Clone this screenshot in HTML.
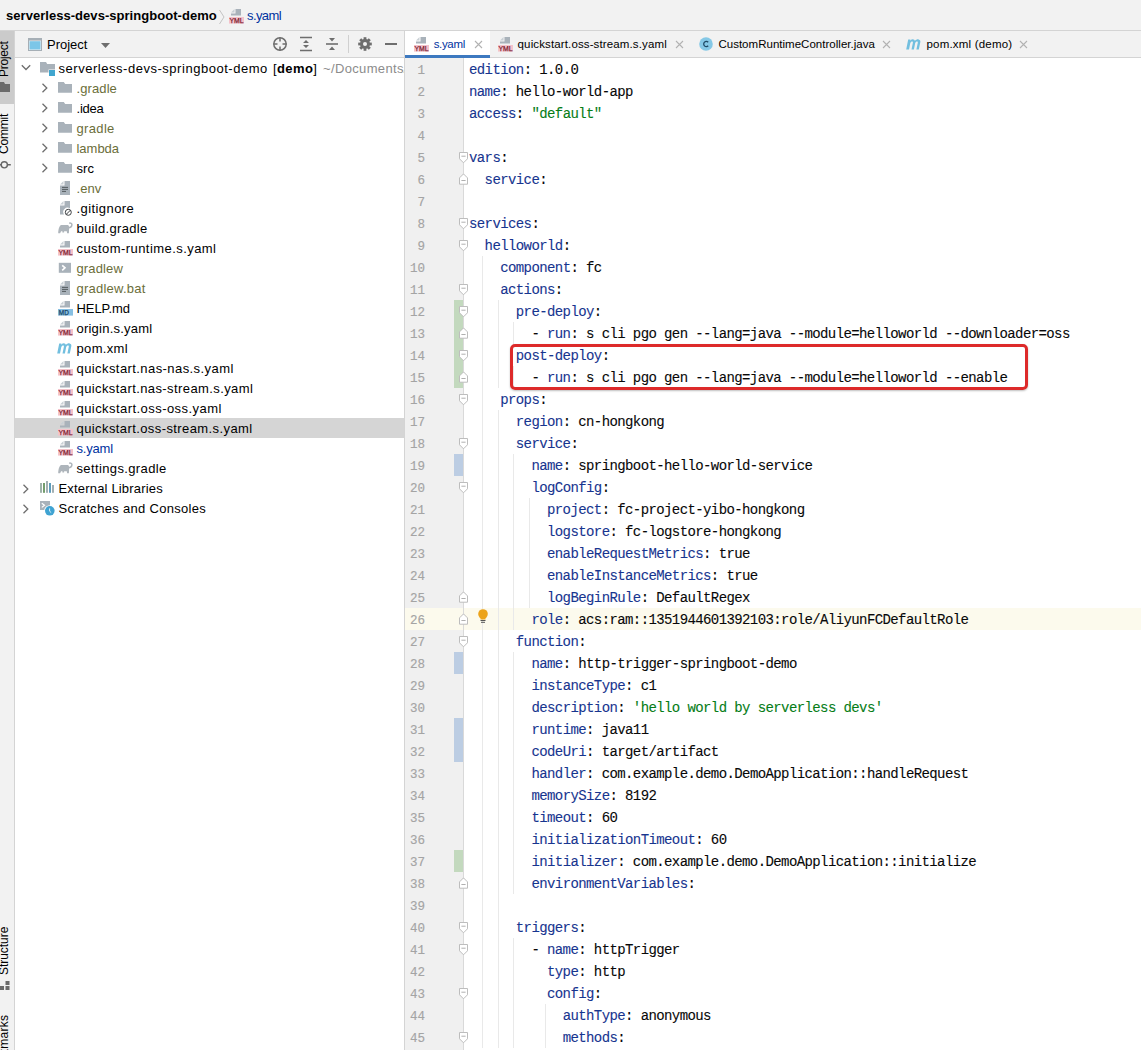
<!DOCTYPE html><html><head><meta charset="utf-8"><style>
html,body{margin:0;padding:0}
body{width:1141px;height:1050px;position:relative;overflow:hidden;background:#f2f2f2;font-family:"Liberation Sans",sans-serif}
.a{position:absolute}
.t{position:absolute;white-space:pre;font-family:"Liberation Sans",sans-serif}
.c{position:absolute;left:469px;white-space:pre;font-family:"Liberation Mono",monospace;font-size:14px;letter-spacing:-0.6px;line-height:22px;color:#080808;-webkit-text-stroke:0.1px currentColor}
.k{color:#17358f}
.s{color:#067d17}
.ln{position:absolute;left:405px;width:20px;text-align:right;white-space:pre;font-family:"Liberation Mono",monospace;font-size:12.5px;line-height:22px;color:#a4a4a4;-webkit-text-stroke:0.15px currentColor}
</style></head><body>
<div class="a" style="left:0;top:0;width:1141px;height:30px;background:#f2f2f2"></div>
<div class="a" style="left:0;top:30px;width:1141px;height:1px;background:#d4d4d4"></div>
<div class="t" style="left:6px;top:6px;font-size:13px;line-height:20px;color:#000;letter-spacing:0.04px;font-weight:bold;">serverless-devs-springboot-demo</div>
<svg class="a" style="left:218px;top:9px" width="8" height="16" viewBox="0 0 8 16"><path d="M1.5 1L6 8L1.5 15" fill="none" stroke="#c4c4c4" stroke-width="1"/></svg>
<svg style="position:absolute;left:229px;top:8px" width="16" height="16" viewBox="0 0 16 16"><g transform="translate(0,1)"><path d="M6.5 0H12V6.5H2V4.5H6.5Z" fill="#a9b2ba"/><path d="M5.5 0V3.5H2Z" fill="#c9d0d5"/></g><rect x="0" y="9" width="15" height="6.6" fill="#f4c2ca"/><text x="7.5" y="14.6" font-family="Liberation Sans" font-size="7.4" fill="#7a1c30" stroke="#7a1c30" stroke-width="0.25" text-anchor="middle" textLength="14" lengthAdjust="spacingAndGlyphs">YML</text></svg>
<div class="t" style="left:247px;top:6px;font-size:13px;line-height:20px;color:#0032a0;letter-spacing:-0.6px;">s.yaml</div>
<div class="a" style="left:0;top:31px;width:14px;height:1019px;background:#f2f2f2"></div>
<div class="a" style="left:14px;top:31px;width:1px;height:1019px;background:#d4d4d4"></div>
<div class="a" style="left:0;top:31px;width:14px;height:73px;background:#cbcbcb"></div>
<div class="t" style="left:0;top:76.5px;width:0;height:0;"><div style="position:absolute;left:-3px;top:0;transform-origin:0 0;transform:rotate(-90deg);font-size:12px;line-height:14px;letter-spacing:-0.25px;color:#000;white-space:pre">Project</div></div>
<svg class="a" style="left:0;top:82px" width="11" height="11" viewBox="0 0 11 11"><path d="M0 0H4L5 2H10V10H0Z" fill="#6b6b6b"/></svg>
<div class="t" style="left:0;top:154px;width:0;height:0;"><div style="position:absolute;left:-3px;top:0;transform-origin:0 0;transform:rotate(-90deg);font-size:12px;line-height:14px;letter-spacing:-0.2px;color:#000;white-space:pre">Commit</div></div>
<svg class="a" style="left:0;top:158px" width="12" height="14" viewBox="0 0 12 14"><circle cx="4.3" cy="6.8" r="3.1" fill="none" stroke="#666" stroke-width="1.4"/><path d="M0 6.8H1.2M7.4 6.8H10.8" stroke="#666" stroke-width="1.4"/></svg>
<div class="t" style="left:0;top:974.5px;width:0;height:0;"><div style="position:absolute;left:-3px;top:0;transform-origin:0 0;transform:rotate(-90deg);font-size:12px;line-height:14px;letter-spacing:-0.037px;color:#000;white-space:pre">Structure</div></div>
<svg class="a" style="left:0;top:981px" width="11" height="10" viewBox="0 0 11 10"><rect x="0" y="5" width="4" height="4" fill="#6b6b6b"/><rect x="5.5" y="5" width="4" height="4" fill="#6b6b6b"/><rect x="5.5" y="0" width="4" height="4" fill="#6b6b6b"/></svg>
<div class="t" style="left:0;top:1077px;width:0;height:0;"><div style="position:absolute;left:-3px;top:0;transform-origin:0 0;transform:rotate(-90deg);font-size:12px;line-height:14px;letter-spacing:0.25px;color:#000;white-space:pre">Bookmarks</div></div>
<div class="a" style="left:15px;top:31px;width:389px;height:26px;background:#f2f2f2"></div>
<div class="a" style="left:15px;top:57px;width:389px;height:1px;background:#d4d4d4"></div>
<svg class="a" style="left:28px;top:38px" width="14" height="13" viewBox="0 0 14 13"><rect x="0.5" y="0.5" width="13" height="12" fill="none" stroke="#a6afb6" stroke-width="1"/><rect x="0" y="0" width="14" height="2.6" fill="#a6afb6"/><rect x="1.5" y="3.2" width="11" height="8.3" fill="#7cc6e8"/></svg>
<div class="t" style="left:47px;top:35px;font-size:13px;line-height:20px;color:#000;letter-spacing:0.0px;">Project</div>
<svg class="a" style="left:100.5px;top:42.8px" width="9" height="5" viewBox="0 0 9 5"><path d="M0 0H9L4.5 5Z" fill="#6e6e6e"/></svg>
<svg class="a" style="left:272px;top:36px" width="16" height="16" viewBox="0 0 16 16"><circle cx="8" cy="8" r="6.2" fill="none" stroke="#6e6e6e" stroke-width="1.5"/><path d="M8 1.5V5.5M8 10.5V14.5M1.5 8H5.5M10.5 8H14.5" stroke="#6e6e6e" stroke-width="1.5"/></svg>
<svg class="a" style="left:299px;top:36px" width="14" height="16" viewBox="0 0 14 16"><path d="M1 1.5H13M1 14.5H13" stroke="#6e6e6e" stroke-width="1.6"/><path d="M7 4L10 7H4Z M7 12L4 9H10Z" fill="#6e6e6e"/></svg>
<svg class="a" style="left:325px;top:36px" width="14" height="16" viewBox="0 0 14 16"><path d="M1 8H13" stroke="#6e6e6e" stroke-width="1.6"/><path d="M4 2H10L7 5.5Z M4 14H10L7 10.5Z" fill="#6e6e6e"/></svg>
<div class="a" style="left:348px;top:35px;width:1px;height:18px;background:#d0d0d0"></div>
<svg class="a" style="left:357px;top:36px" width="16" height="16" viewBox="0 0 16 16"><g fill="#6e6e6e"><circle cx="8" cy="8" r="5"/><rect x="6.6" y="1.2" width="2.8" height="3" transform="rotate(0 8 8)"/><rect x="6.6" y="1.2" width="2.8" height="3" transform="rotate(45 8 8)"/><rect x="6.6" y="1.2" width="2.8" height="3" transform="rotate(90 8 8)"/><rect x="6.6" y="1.2" width="2.8" height="3" transform="rotate(135 8 8)"/><rect x="6.6" y="1.2" width="2.8" height="3" transform="rotate(180 8 8)"/><rect x="6.6" y="1.2" width="2.8" height="3" transform="rotate(225 8 8)"/><rect x="6.6" y="1.2" width="2.8" height="3" transform="rotate(270 8 8)"/><rect x="6.6" y="1.2" width="2.8" height="3" transform="rotate(315 8 8)"/></g><circle cx="8" cy="8" r="2" fill="#f2f2f2"/></svg>
<div class="a" style="left:385px;top:43px;width:12px;height:2px;background:#6e6e6e"></div>
<div class="a" style="left:15px;top:58px;width:389px;height:992px;background:#fff"></div>
<div class="a" style="left:404px;top:31px;width:1px;height:1019px;background:#d4d4d4"></div>
<div class="a" style="left:15px;top:418px;width:389px;height:20px;background:#d5d5d5"></div>
<svg style="position:absolute;left:21px;top:63.6px" width="10" height="7" viewBox="0 0 10 7"><path d="M0.8 1.2L5 5.5L9.2 1.2" fill="none" stroke="#6e6e6e" stroke-width="1.3"/></svg>
<svg style="position:absolute;left:40px;top:62px" width="16" height="15" viewBox="0 0 16 15"><path d="M0 0H6L7.2 2H15V7.5H8.5V10.5H0Z" fill="#a9b2ba"/><rect x="9" y="8" width="6" height="6" fill="#41a6cf"/></svg>
<div class="t" style="left:58.5px;top:59px;font-size:13px;line-height:20px;color:#000;letter-spacing:0.53px;">serverless-devs-springboot-demo</div>
<svg style="position:absolute;left:40.5px;top:82.5px" width="8" height="10" viewBox="0 0 8 10"><path d="M1.5 0.8L5.8 5L1.5 9.2" fill="none" stroke="#6e6e6e" stroke-width="1.3"/></svg>
<svg style="position:absolute;left:58px;top:82px" width="15" height="12" viewBox="0 0 15 12"><path d="M0 0H5.8L7.2 2H14V10.8H0Z" fill="#a9b2ba"/></svg>
<div class="t" style="left:76.5px;top:79px;font-size:13px;line-height:20px;color:#6b6e3a;letter-spacing:0.1px;">.gradle</div>
<svg style="position:absolute;left:40.5px;top:102.5px" width="8" height="10" viewBox="0 0 8 10"><path d="M1.5 0.8L5.8 5L1.5 9.2" fill="none" stroke="#6e6e6e" stroke-width="1.3"/></svg>
<svg style="position:absolute;left:58px;top:102px" width="15" height="12" viewBox="0 0 15 12"><path d="M0 0H5.8L7.2 2H14V10.8H0Z" fill="#a9b2ba"/></svg>
<div class="t" style="left:76.5px;top:99px;font-size:13px;line-height:20px;color:#000;letter-spacing:-0.225px;">.idea</div>
<svg style="position:absolute;left:40.5px;top:122.5px" width="8" height="10" viewBox="0 0 8 10"><path d="M1.5 0.8L5.8 5L1.5 9.2" fill="none" stroke="#6e6e6e" stroke-width="1.3"/></svg>
<svg style="position:absolute;left:58px;top:122px" width="15" height="12" viewBox="0 0 15 12"><path d="M0 0H5.8L7.2 2H14V10.8H0Z" fill="#a9b2ba"/></svg>
<div class="t" style="left:76.5px;top:119px;font-size:13px;line-height:20px;color:#6b6e3a;letter-spacing:0.34px;">gradle</div>
<svg style="position:absolute;left:40.5px;top:142.5px" width="8" height="10" viewBox="0 0 8 10"><path d="M1.5 0.8L5.8 5L1.5 9.2" fill="none" stroke="#6e6e6e" stroke-width="1.3"/></svg>
<svg style="position:absolute;left:58px;top:142px" width="15" height="12" viewBox="0 0 15 12"><path d="M0 0H5.8L7.2 2H14V10.8H0Z" fill="#a9b2ba"/></svg>
<div class="t" style="left:76.5px;top:139px;font-size:13px;line-height:20px;color:#6b6e3a;letter-spacing:-0.02px;">lambda</div>
<svg style="position:absolute;left:40.5px;top:162.5px" width="8" height="10" viewBox="0 0 8 10"><path d="M1.5 0.8L5.8 5L1.5 9.2" fill="none" stroke="#6e6e6e" stroke-width="1.3"/></svg>
<svg style="position:absolute;left:58px;top:162px" width="15" height="12" viewBox="0 0 15 12"><path d="M0 0H5.8L7.2 2H14V10.8H0Z" fill="#a9b2ba"/></svg>
<div class="t" style="left:76.5px;top:159px;font-size:13px;line-height:20px;color:#000;letter-spacing:0.1px;">src</div>
<svg style="position:absolute;left:58px;top:180px" width="16" height="16" viewBox="0 0 16 16"><g transform="translate(0,1)"><path d="M6.5 0H12V14H2V4.5H6.5Z" fill="#a9b2ba"/><path d="M5.5 0V3.5H2Z" fill="#c9d0d5"/></g><path d="M4 7.4H10M4 9.4H10M4 11.4H8" stroke="#4a5156" stroke-width="0.9"/></svg>
<div class="t" style="left:76.5px;top:179px;font-size:13px;line-height:20px;color:#6b6e3a;letter-spacing:0.067px;">.env</div>
<svg style="position:absolute;left:58px;top:200px" width="16" height="16" viewBox="0 0 16 16"><g transform="translate(0,1)"><path d="M6.5 0H12V7.4A4.4 4.4 0 0 0 6 13.6H2V4.5H6.5Z" fill="#a9b2ba"/><path d="M5.5 0V3.5H2Z" fill="#c9d0d5"/></g><circle cx="10.3" cy="12.3" r="3" fill="none" stroke="#3c3f42" stroke-width="1"/><path d="M8.2 14.4L12.4 10.2" stroke="#3c3f42" stroke-width="1"/></svg>
<div class="t" style="left:76.5px;top:199px;font-size:13px;line-height:20px;color:#000;letter-spacing:0.422px;">.gitignore</div>
<svg style="position:absolute;left:57px;top:220px" width="17" height="16" viewBox="0 0 17 16"><path d="M1.2 13.2C1.4 9 2.4 5.6 4.2 5.1H10.8C11.6 5.3 12 6.2 12.2 7.2L11.9 13.3H10.1L9.8 11.3H7.1V12.6H5.4V11.3H4.1L3.1 13.2Z" fill="#aeb5bb"/><path d="M11.2 7.8C13.4 7.8 14.9 6.3 14.9 4.6C14.9 3.4 13.8 2.9 12.2 3.2" fill="none" stroke="#aeb5bb" stroke-width="1.5"/></svg>
<div class="t" style="left:76.5px;top:219px;font-size:13px;line-height:20px;color:#000;letter-spacing:0.318px;">build.gradle</div>
<svg style="position:absolute;left:58px;top:240px" width="16" height="16" viewBox="0 0 16 16"><g transform="translate(0,1)"><path d="M6.5 0H12V6.5H2V4.5H6.5Z" fill="#a9b2ba"/><path d="M5.5 0V3.5H2Z" fill="#c9d0d5"/></g><rect x="0" y="9" width="15" height="6.6" fill="#f4c2ca"/><text x="7.5" y="14.6" font-family="Liberation Sans" font-size="7.4" fill="#7a1c30" stroke="#7a1c30" stroke-width="0.25" text-anchor="middle" textLength="14" lengthAdjust="spacingAndGlyphs">YML</text></svg>
<div class="t" style="left:76.5px;top:239px;font-size:13px;line-height:20px;color:#000;letter-spacing:0.435px;">custom-runtime.s.yaml</div>
<svg style="position:absolute;left:58px;top:260px" width="16" height="16" viewBox="0 0 16 16"><rect x="0.8" y="2.8" width="12.2" height="10" fill="#a9b2ba"/><path d="M4.2 5.3L7 7.8L4.2 10.3" fill="none" stroke="#fff" stroke-width="1.6"/></svg>
<div class="t" style="left:76.5px;top:259px;font-size:13px;line-height:20px;color:#6b6e3a;letter-spacing:0.133px;">gradlew</div>
<svg style="position:absolute;left:58px;top:280px" width="16" height="16" viewBox="0 0 16 16"><g transform="translate(0,1)"><path d="M6.5 0H12V14H2V4.5H6.5Z" fill="#a9b2ba"/><path d="M5.5 0V3.5H2Z" fill="#c9d0d5"/></g><path d="M4 7.4H10M4 9.4H10M4 11.4H8" stroke="#4a5156" stroke-width="0.9"/></svg>
<div class="t" style="left:76.5px;top:279px;font-size:13px;line-height:20px;color:#6b6e3a;letter-spacing:0.23px;">gradlew.bat</div>
<svg style="position:absolute;left:58px;top:300px" width="16" height="16" viewBox="0 0 16 16"><g transform="translate(0,1)"><path d="M6.5 0H12V6.5H2V4.5H6.5Z" fill="#a9b2ba"/><path d="M5.5 0V3.5H2Z" fill="#c9d0d5"/></g><rect x="0" y="9" width="15" height="6.6" fill="#86bfe2"/><text x="5.8" y="14.6" font-family="Liberation Sans" font-size="7.4" fill="#173f63" stroke="#173f63" stroke-width="0.25" text-anchor="middle" textLength="10" lengthAdjust="spacingAndGlyphs">MD</text></svg>
<div class="t" style="left:76.5px;top:299px;font-size:13px;line-height:20px;color:#000;letter-spacing:-0.083px;">HELP.md</div>
<svg style="position:absolute;left:58px;top:320px" width="16" height="16" viewBox="0 0 16 16"><g transform="translate(0,1)"><path d="M6.5 0H12V6.5H2V4.5H6.5Z" fill="#a9b2ba"/><path d="M5.5 0V3.5H2Z" fill="#c9d0d5"/></g><rect x="0" y="9" width="15" height="6.6" fill="#f4c2ca"/><text x="7.5" y="14.6" font-family="Liberation Sans" font-size="7.4" fill="#7a1c30" stroke="#7a1c30" stroke-width="0.25" text-anchor="middle" textLength="14" lengthAdjust="spacingAndGlyphs">YML</text></svg>
<div class="t" style="left:76.5px;top:319px;font-size:13px;line-height:20px;color:#000;letter-spacing:0.225px;">origin.s.yaml</div>
<svg style="position:absolute;left:57px;top:343px" width="16" height="11" viewBox="0 0 16 11"><path d="M0.2 10.5L2.2 0.6H4.4L4.2 1.7C5.2 0.6 6.4 0.2 7.4 0.4C8.4 0.6 8.8 1.2 8.9 1.9C10 0.7 11.4 0.2 12.6 0.4C14.2 0.7 14.6 1.9 14.3 3.3L12.8 10.5H10.4L11.8 3.8C11.9 3.1 11.7 2.6 11 2.6C10.2 2.6 9.5 3.2 9.2 4.1L7.9 10.5H5.5L6.9 3.8C7 3.1 6.8 2.6 6.1 2.6C5.3 2.6 4.6 3.2 4.3 4.1L3 10.5Z" fill="#72bfdf"/></svg>
<div class="t" style="left:76.5px;top:339px;font-size:13px;line-height:20px;color:#000;letter-spacing:0.333px;">pom.xml</div>
<svg style="position:absolute;left:58px;top:360px" width="16" height="16" viewBox="0 0 16 16"><g transform="translate(0,1)"><path d="M6.5 0H12V6.5H2V4.5H6.5Z" fill="#a9b2ba"/><path d="M5.5 0V3.5H2Z" fill="#c9d0d5"/></g><rect x="0" y="9" width="15" height="6.6" fill="#f4c2ca"/><text x="7.5" y="14.6" font-family="Liberation Sans" font-size="7.4" fill="#7a1c30" stroke="#7a1c30" stroke-width="0.25" text-anchor="middle" textLength="14" lengthAdjust="spacingAndGlyphs">YML</text></svg>
<div class="t" style="left:76.5px;top:359px;font-size:13px;line-height:20px;color:#000;letter-spacing:0.421px;">quickstart.nas-nas.s.yaml</div>
<svg style="position:absolute;left:58px;top:380px" width="16" height="16" viewBox="0 0 16 16"><g transform="translate(0,1)"><path d="M6.5 0H12V6.5H2V4.5H6.5Z" fill="#a9b2ba"/><path d="M5.5 0V3.5H2Z" fill="#c9d0d5"/></g><rect x="0" y="9" width="15" height="6.6" fill="#f4c2ca"/><text x="7.5" y="14.6" font-family="Liberation Sans" font-size="7.4" fill="#7a1c30" stroke="#7a1c30" stroke-width="0.25" text-anchor="middle" textLength="14" lengthAdjust="spacingAndGlyphs">YML</text></svg>
<div class="t" style="left:76.5px;top:379px;font-size:13px;line-height:20px;color:#000;letter-spacing:0.404px;">quickstart.nas-stream.s.yaml</div>
<svg style="position:absolute;left:58px;top:400px" width="16" height="16" viewBox="0 0 16 16"><g transform="translate(0,1)"><path d="M6.5 0H12V6.5H2V4.5H6.5Z" fill="#a9b2ba"/><path d="M5.5 0V3.5H2Z" fill="#c9d0d5"/></g><rect x="0" y="9" width="15" height="6.6" fill="#f4c2ca"/><text x="7.5" y="14.6" font-family="Liberation Sans" font-size="7.4" fill="#7a1c30" stroke="#7a1c30" stroke-width="0.25" text-anchor="middle" textLength="14" lengthAdjust="spacingAndGlyphs">YML</text></svg>
<div class="t" style="left:76.5px;top:399px;font-size:13px;line-height:20px;color:#000;letter-spacing:0.441px;">quickstart.oss-oss.yaml</div>
<svg style="position:absolute;left:58px;top:420px" width="16" height="16" viewBox="0 0 16 16"><g transform="translate(0,1)"><path d="M6.5 0H12V6.5H2V4.5H6.5Z" fill="#a9b2ba"/><path d="M5.5 0V3.5H2Z" fill="#c9d0d5"/></g><rect x="0" y="9" width="15" height="6.6" fill="#f4c2ca"/><text x="7.5" y="14.6" font-family="Liberation Sans" font-size="7.4" fill="#7a1c30" stroke="#7a1c30" stroke-width="0.25" text-anchor="middle" textLength="14" lengthAdjust="spacingAndGlyphs">YML</text></svg>
<div class="t" style="left:76.5px;top:419px;font-size:13px;line-height:20px;color:#000;letter-spacing:0.407px;">quickstart.oss-stream.s.yaml</div>
<svg style="position:absolute;left:58px;top:440px" width="16" height="16" viewBox="0 0 16 16"><g transform="translate(0,1)"><path d="M6.5 0H12V6.5H2V4.5H6.5Z" fill="#a9b2ba"/><path d="M5.5 0V3.5H2Z" fill="#c9d0d5"/></g><rect x="0" y="9" width="15" height="6.6" fill="#f4c2ca"/><text x="7.5" y="14.6" font-family="Liberation Sans" font-size="7.4" fill="#7a1c30" stroke="#7a1c30" stroke-width="0.25" text-anchor="middle" textLength="14" lengthAdjust="spacingAndGlyphs">YML</text></svg>
<div class="t" style="left:76.5px;top:439px;font-size:13px;line-height:20px;color:#0032a0;letter-spacing:-0.18px;">s.yaml</div>
<svg style="position:absolute;left:57px;top:460px" width="17" height="16" viewBox="0 0 17 16"><path d="M1.2 13.2C1.4 9 2.4 5.6 4.2 5.1H10.8C11.6 5.3 12 6.2 12.2 7.2L11.9 13.3H10.1L9.8 11.3H7.1V12.6H5.4V11.3H4.1L3.1 13.2Z" fill="#aeb5bb"/><path d="M11.2 7.8C13.4 7.8 14.9 6.3 14.9 4.6C14.9 3.4 13.8 2.9 12.2 3.2" fill="none" stroke="#aeb5bb" stroke-width="1.5"/></svg>
<div class="t" style="left:76.5px;top:459px;font-size:13px;line-height:20px;color:#000;letter-spacing:0.371px;">settings.gradle</div>
<svg style="position:absolute;left:22.3px;top:484px" width="8" height="10" viewBox="0 0 8 10"><path d="M1.5 0.8L5.8 5L1.5 9.2" fill="none" stroke="#6e6e6e" stroke-width="1.3"/></svg>
<svg style="position:absolute;left:40px;top:478px" width="16" height="16" viewBox="0 0 16 16"><rect x="0" y="5" width="2" height="9.8" fill="#9fb2aa"/><rect x="3" y="5" width="2" height="9.8" fill="#739d6d"/><rect x="6" y="3" width="2" height="11.8" fill="#a3b0b3"/><rect x="9" y="5" width="2" height="9.8" fill="#5d9dbd"/><rect x="12" y="7" width="2" height="7.8" fill="#a3b0b3"/></svg>
<div class="t" style="left:58.5px;top:479px;font-size:13px;line-height:20px;color:#000;letter-spacing:0.176px;">External Libraries</div>
<svg style="position:absolute;left:22.3px;top:504px" width="8" height="10" viewBox="0 0 8 10"><path d="M1.5 0.8L5.8 5L1.5 9.2" fill="none" stroke="#6e6e6e" stroke-width="1.3"/></svg>
<svg style="position:absolute;left:40px;top:501px" width="18" height="18" viewBox="0 0 18 18"><rect x="0" y="0" width="10" height="9" fill="#a9b2ba"/><path d="M1.8 2.2L4.5 4.3L1.8 6.4" fill="none" stroke="#fff" stroke-width="1.2"/><circle cx="9.8" cy="9.8" r="5.6" fill="#fff"/><circle cx="9.8" cy="9.8" r="4.8" fill="#3fa3d2"/><path d="M9.6 7.4V10.2L11.2 11.6" fill="none" stroke="#d8f0fb" stroke-width="1"/></svg>
<div class="t" style="left:58.5px;top:499px;font-size:13px;line-height:20px;color:#000;letter-spacing:0.305px;">Scratches and Consoles</div>
<div class="t" style="left:273px;top:59px;font-size:13px;line-height:20px;letter-spacing:0.4px;color:#000">[<b>demo</b>]</div>
<div class="t" style="left:323px;top:59px;width:81px;overflow:hidden;font-size:13px;line-height:20px;letter-spacing:0.35px;color:#8c8c8c">~/Documents/</div>
<div class="a" style="left:405px;top:31px;width:736px;height:26px;background:#f2f2f2"></div>
<div class="a" style="left:405px;top:57px;width:736px;height:1px;background:#d4d4d4"></div>
<div class="a" style="left:405px;top:31px;width:85px;height:27px;background:#fff"></div>
<div class="a" style="left:405px;top:55px;width:85px;height:3px;background:#3d79c0"></div>
<svg style="position:absolute;left:413.5px;top:36px" width="16" height="16" viewBox="0 0 16 16"><g transform="translate(0,1)"><path d="M6.5 0H12V6.5H2V4.5H6.5Z" fill="#a9b2ba"/><path d="M5.5 0V3.5H2Z" fill="#c9d0d5"/></g><rect x="0" y="9" width="15" height="6.6" fill="#f4c2ca"/><text x="7.5" y="14.6" font-family="Liberation Sans" font-size="7.4" fill="#7a1c30" stroke="#7a1c30" stroke-width="0.25" text-anchor="middle" textLength="14" lengthAdjust="spacingAndGlyphs">YML</text></svg>
<div class="t" style="left:433.7px;top:34.3px;font-size:11.5px;line-height:20px;color:#0032a0;letter-spacing:-0.34px;">s.yaml</div>
<svg class="a" style="left:473.5px;top:40px" width="9" height="9" viewBox="0 0 9 9"><path d="M1 1L8 8M8 1L1 8" stroke="#b2b2b2" stroke-width="1.1"/></svg>
<svg style="position:absolute;left:498px;top:36px" width="16" height="16" viewBox="0 0 16 16"><g transform="translate(0,1)"><path d="M6.5 0H12V6.5H2V4.5H6.5Z" fill="#a9b2ba"/><path d="M5.5 0V3.5H2Z" fill="#c9d0d5"/></g><rect x="0" y="9" width="15" height="6.6" fill="#f4c2ca"/><text x="7.5" y="14.6" font-family="Liberation Sans" font-size="7.4" fill="#7a1c30" stroke="#7a1c30" stroke-width="0.25" text-anchor="middle" textLength="14" lengthAdjust="spacingAndGlyphs">YML</text></svg>
<div class="t" style="left:517.6px;top:34.3px;font-size:11.5px;line-height:20px;color:#000;letter-spacing:0.126px;">quickstart.oss-stream.s.yaml</div>
<svg class="a" style="left:675px;top:40px" width="9" height="9" viewBox="0 0 9 9"><path d="M1 1L8 8M8 1L1 8" stroke="#b2b2b2" stroke-width="1.1"/></svg>
<svg style="position:absolute;left:699.2px;top:37px" width="16" height="16" viewBox="0 0 16 16"><circle cx="7" cy="7" r="6.8" fill="#85c8e6"/><path d="M9.2 5.2A2.6 2.6 0 1 0 9.2 8.8" fill="none" stroke="#1f4a66" stroke-width="1.3"/></svg>
<div class="t" style="left:718.4px;top:34.3px;font-size:11.5px;line-height:20px;color:#000;letter-spacing:0.022px;">CustomRuntimeController.java</div>
<svg class="a" style="left:882px;top:40px" width="9" height="9" viewBox="0 0 9 9"><path d="M1 1L8 8M8 1L1 8" stroke="#b2b2b2" stroke-width="1.1"/></svg>
<svg style="position:absolute;left:906px;top:39px" width="16" height="11" viewBox="0 0 16 11"><path d="M0.2 10.5L2.2 0.6H4.4L4.2 1.7C5.2 0.6 6.4 0.2 7.4 0.4C8.4 0.6 8.8 1.2 8.9 1.9C10 0.7 11.4 0.2 12.6 0.4C14.2 0.7 14.6 1.9 14.3 3.3L12.8 10.5H10.4L11.8 3.8C11.9 3.1 11.7 2.6 11 2.6C10.2 2.6 9.5 3.2 9.2 4.1L7.9 10.5H5.5L6.9 3.8C7 3.1 6.8 2.6 6.1 2.6C5.3 2.6 4.6 3.2 4.3 4.1L3 10.5Z" fill="#72bfdf"/></svg>
<div class="t" style="left:926.5px;top:34.3px;font-size:11.5px;line-height:20px;color:#000;letter-spacing:0.192px;">pom.xml (demo)</div>
<svg class="a" style="left:1019px;top:40px" width="9" height="9" viewBox="0 0 9 9"><path d="M1 1L8 8M8 1L1 8" stroke="#b2b2b2" stroke-width="1.1"/></svg>
<div class="a" style="left:405px;top:58px;width:58px;height:992px;background:#f0f0f0"></div>
<div class="a" style="left:464px;top:58px;width:677px;height:992px;background:#fff"></div>
<div class="a" style="left:405px;top:608px;width:736px;height:22px;background:#fcfaed"></div>
<div class="a" style="left:463px;top:58px;width:1px;height:992px;background:#d9d9d9"></div>
<div class="a" style="left:454px;top:300px;width:9px;height:88px;background:#c3d9be"></div>
<div class="a" style="left:454px;top:454px;width:9px;height:22px;background:#bccde3"></div>
<div class="a" style="left:454px;top:652px;width:9px;height:22px;background:#bccde3"></div>
<div class="a" style="left:454px;top:718px;width:9px;height:44px;background:#bccde3"></div>
<div class="a" style="left:454px;top:850px;width:9px;height:22px;background:#c3d9be"></div>
<div class="a" style="left:482.1px;top:256px;width:1px;height:792px;background:#e9e9e9"></div>
<div class="a" style="left:497.7px;top:300px;width:1px;height:88px;background:#e9e9e9"></div>
<div class="a" style="left:513.3px;top:322px;width:1px;height:22px;background:#e9e9e9"></div>
<div class="a" style="left:513.3px;top:366px;width:1px;height:22px;background:#e9e9e9"></div>
<div class="a" style="left:497.7px;top:410px;width:1px;height:638px;background:#e9e9e9"></div>
<div class="a" style="left:513.3px;top:454px;width:1px;height:176px;background:#e9e9e9"></div>
<div class="a" style="left:528.9px;top:498px;width:1px;height:110px;background:#e9e9e9"></div>
<div class="a" style="left:513.3px;top:652px;width:1px;height:242px;background:#e9e9e9"></div>
<div class="a" style="left:513.3px;top:938px;width:1px;height:110px;background:#e9e9e9"></div>
<div class="a" style="left:544.5px;top:1004px;width:1px;height:44px;background:#e9e9e9"></div>
<div class="c" style="top:58.9px"><span class="k">edition</span>: 1.0.0</div>
<div class="c" style="top:80.9px"><span class="k">name</span>: hello-world-app</div>
<div class="c" style="top:102.9px"><span class="k">access</span>: <span class="s">&quot;default&quot;</span></div>
<div class="c" style="top:124.9px"></div>
<div class="c" style="top:146.9px"><span class="k">vars</span>:</div>
<div class="c" style="top:168.9px">  <span class="k">service</span>:</div>
<div class="c" style="top:190.9px"></div>
<div class="c" style="top:212.9px"><span class="k">services</span>:</div>
<div class="c" style="top:234.9px">  <span class="k">helloworld</span>:</div>
<div class="c" style="top:256.9px">    <span class="k">component</span>: fc</div>
<div class="c" style="top:278.9px">    <span class="k">actions</span>:</div>
<div class="c" style="top:300.9px">      <span class="k">pre-deploy</span>:</div>
<div class="c" style="top:322.9px">        - <span class="k">run</span>: s cli pgo gen --lang=java --module=helloworld --downloader=oss</div>
<div class="c" style="top:344.9px">      <span class="k">post-deploy</span>:</div>
<div class="c" style="top:366.9px">        - <span class="k">run</span>: s cli pgo gen --lang=java --module=helloworld --enable</div>
<div class="c" style="top:388.9px">    <span class="k">props</span>:</div>
<div class="c" style="top:410.9px">      <span class="k">region</span>: cn-hongkong</div>
<div class="c" style="top:432.9px">      <span class="k">service</span>:</div>
<div class="c" style="top:454.9px">        <span class="k">name</span>: springboot-hello-world-service</div>
<div class="c" style="top:476.9px">        <span class="k">logConfig</span>:</div>
<div class="c" style="top:498.9px">          <span class="k">project</span>: fc-project-yibo-hongkong</div>
<div class="c" style="top:520.9px">          <span class="k">logstore</span>: fc-logstore-hongkong</div>
<div class="c" style="top:542.9px">          <span class="k">enableRequestMetrics</span>: true</div>
<div class="c" style="top:564.9px">          <span class="k">enableInstanceMetrics</span>: true</div>
<div class="c" style="top:586.9px">          <span class="k">logBeginRule</span>: DefaultRegex</div>
<div class="c" style="top:608.9px">        <span class="k">role</span>: acs:ram::1351944601392103:role/AliyunFCDefaultRole</div>
<div class="c" style="top:630.9px">      <span class="k">function</span>:</div>
<div class="c" style="top:652.9px">        <span class="k">name</span>: http-trigger-springboot-demo</div>
<div class="c" style="top:674.9px">        <span class="k">instanceType</span>: c1</div>
<div class="c" style="top:696.9px">        <span class="k">description</span>: <span class="s">&#x27;hello world by serverless devs&#x27;</span></div>
<div class="c" style="top:718.9px">        <span class="k">runtime</span>: java11</div>
<div class="c" style="top:740.9px">        <span class="k">codeUri</span>: target/artifact</div>
<div class="c" style="top:762.9px">        <span class="k">handler</span>: com.example.demo.DemoApplication::handleRequest</div>
<div class="c" style="top:784.9px">        <span class="k">memorySize</span>: 8192</div>
<div class="c" style="top:806.9px">        <span class="k">timeout</span>: 60</div>
<div class="c" style="top:828.9px">        <span class="k">initializationTimeout</span>: 60</div>
<div class="c" style="top:850.9px">        <span class="k">initializer</span>: com.example.demo.DemoApplication::initialize</div>
<div class="c" style="top:872.9px">        <span class="k">environmentVariables</span>:</div>
<div class="c" style="top:894.9px"></div>
<div class="c" style="top:916.9px">      <span class="k">triggers</span>:</div>
<div class="c" style="top:938.9px">        - <span class="k">name</span>: httpTrigger</div>
<div class="c" style="top:960.9px">          <span class="k">type</span>: http</div>
<div class="c" style="top:982.9px">          <span class="k">config</span>:</div>
<div class="c" style="top:1004.9px">            <span class="k">authType</span>: anonymous</div>
<div class="c" style="top:1026.9px">            <span class="k">methods</span>:</div>
<div class="ln" style="top:60.1px">1</div>
<div class="ln" style="top:82.1px">2</div>
<div class="ln" style="top:104.1px">3</div>
<div class="ln" style="top:126.1px">4</div>
<div class="ln" style="top:148.1px">5</div>
<div class="ln" style="top:170.1px">6</div>
<div class="ln" style="top:192.1px">7</div>
<div class="ln" style="top:214.1px">8</div>
<div class="ln" style="top:236.1px">9</div>
<div class="ln" style="top:258.1px">10</div>
<div class="ln" style="top:280.1px">11</div>
<div class="ln" style="top:302.1px">12</div>
<div class="ln" style="top:324.1px">13</div>
<div class="ln" style="top:346.1px">14</div>
<div class="ln" style="top:368.1px">15</div>
<div class="ln" style="top:390.1px">16</div>
<div class="ln" style="top:412.1px">17</div>
<div class="ln" style="top:434.1px">18</div>
<div class="ln" style="top:456.1px">19</div>
<div class="ln" style="top:478.1px">20</div>
<div class="ln" style="top:500.1px">21</div>
<div class="ln" style="top:522.1px">22</div>
<div class="ln" style="top:544.1px">23</div>
<div class="ln" style="top:566.1px">24</div>
<div class="ln" style="top:588.1px">25</div>
<div class="ln" style="top:610.1px">26</div>
<div class="ln" style="top:632.1px">27</div>
<div class="ln" style="top:654.1px">28</div>
<div class="ln" style="top:676.1px">29</div>
<div class="ln" style="top:698.1px">30</div>
<div class="ln" style="top:720.1px">31</div>
<div class="ln" style="top:742.1px">32</div>
<div class="ln" style="top:764.1px">33</div>
<div class="ln" style="top:786.1px">34</div>
<div class="ln" style="top:808.1px">35</div>
<div class="ln" style="top:830.1px">36</div>
<div class="ln" style="top:852.1px">37</div>
<div class="ln" style="top:874.1px">38</div>
<div class="ln" style="top:896.1px">39</div>
<div class="ln" style="top:918.1px">40</div>
<div class="ln" style="top:940.1px">41</div>
<div class="ln" style="top:962.1px">42</div>
<div class="ln" style="top:984.1px">43</div>
<div class="ln" style="top:1006.1px">44</div>
<div class="ln" style="top:1028.1px">45</div>
<svg class="a" style="left:459px;top:152.3px" width="9" height="12" viewBox="0 0 9 12"><path d="M0.5 0.5H8.5V6.8L4.5 10.8L0.5 6.8Z" fill="#fff" stroke="#bdbdbd" stroke-width="1"/><path d="M2.4 4.2H6.6" stroke="#b0b0b0" stroke-width="1"/></svg>
<svg class="a" style="left:459px;top:218.3px" width="9" height="12" viewBox="0 0 9 12"><path d="M0.5 0.5H8.5V6.8L4.5 10.8L0.5 6.8Z" fill="#fff" stroke="#bdbdbd" stroke-width="1"/><path d="M2.4 4.2H6.6" stroke="#b0b0b0" stroke-width="1"/></svg>
<svg class="a" style="left:459px;top:240.3px" width="9" height="12" viewBox="0 0 9 12"><path d="M0.5 0.5H8.5V6.8L4.5 10.8L0.5 6.8Z" fill="#fff" stroke="#bdbdbd" stroke-width="1"/><path d="M2.4 4.2H6.6" stroke="#b0b0b0" stroke-width="1"/></svg>
<svg class="a" style="left:459px;top:284.3px" width="9" height="12" viewBox="0 0 9 12"><path d="M0.5 0.5H8.5V6.8L4.5 10.8L0.5 6.8Z" fill="#fff" stroke="#bdbdbd" stroke-width="1"/><path d="M2.4 4.2H6.6" stroke="#b0b0b0" stroke-width="1"/></svg>
<svg class="a" style="left:459px;top:306.3px" width="9" height="12" viewBox="0 0 9 12"><path d="M0.5 0.5H8.5V6.8L4.5 10.8L0.5 6.8Z" fill="#fff" stroke="#bdbdbd" stroke-width="1"/><path d="M2.4 4.2H6.6" stroke="#b0b0b0" stroke-width="1"/></svg>
<svg class="a" style="left:459px;top:350.3px" width="9" height="12" viewBox="0 0 9 12"><path d="M0.5 0.5H8.5V6.8L4.5 10.8L0.5 6.8Z" fill="#fff" stroke="#bdbdbd" stroke-width="1"/><path d="M2.4 4.2H6.6" stroke="#b0b0b0" stroke-width="1"/></svg>
<svg class="a" style="left:459px;top:394.3px" width="9" height="12" viewBox="0 0 9 12"><path d="M0.5 0.5H8.5V6.8L4.5 10.8L0.5 6.8Z" fill="#fff" stroke="#bdbdbd" stroke-width="1"/><path d="M2.4 4.2H6.6" stroke="#b0b0b0" stroke-width="1"/></svg>
<svg class="a" style="left:459px;top:438.3px" width="9" height="12" viewBox="0 0 9 12"><path d="M0.5 0.5H8.5V6.8L4.5 10.8L0.5 6.8Z" fill="#fff" stroke="#bdbdbd" stroke-width="1"/><path d="M2.4 4.2H6.6" stroke="#b0b0b0" stroke-width="1"/></svg>
<svg class="a" style="left:459px;top:482.3px" width="9" height="12" viewBox="0 0 9 12"><path d="M0.5 0.5H8.5V6.8L4.5 10.8L0.5 6.8Z" fill="#fff" stroke="#bdbdbd" stroke-width="1"/><path d="M2.4 4.2H6.6" stroke="#b0b0b0" stroke-width="1"/></svg>
<svg class="a" style="left:459px;top:636.3px" width="9" height="12" viewBox="0 0 9 12"><path d="M0.5 0.5H8.5V6.8L4.5 10.8L0.5 6.8Z" fill="#fff" stroke="#bdbdbd" stroke-width="1"/><path d="M2.4 4.2H6.6" stroke="#b0b0b0" stroke-width="1"/></svg>
<svg class="a" style="left:459px;top:922.3px" width="9" height="12" viewBox="0 0 9 12"><path d="M0.5 0.5H8.5V6.8L4.5 10.8L0.5 6.8Z" fill="#fff" stroke="#bdbdbd" stroke-width="1"/><path d="M2.4 4.2H6.6" stroke="#b0b0b0" stroke-width="1"/></svg>
<svg class="a" style="left:459px;top:944.3px" width="9" height="12" viewBox="0 0 9 12"><path d="M0.5 0.5H8.5V6.8L4.5 10.8L0.5 6.8Z" fill="#fff" stroke="#bdbdbd" stroke-width="1"/><path d="M2.4 4.2H6.6" stroke="#b0b0b0" stroke-width="1"/></svg>
<svg class="a" style="left:459px;top:988.3px" width="9" height="12" viewBox="0 0 9 12"><path d="M0.5 0.5H8.5V6.8L4.5 10.8L0.5 6.8Z" fill="#fff" stroke="#bdbdbd" stroke-width="1"/><path d="M2.4 4.2H6.6" stroke="#b0b0b0" stroke-width="1"/></svg>
<svg class="a" style="left:459px;top:1032.3px" width="9" height="12" viewBox="0 0 9 12"><path d="M0.5 0.5H8.5V6.8L4.5 10.8L0.5 6.8Z" fill="#fff" stroke="#bdbdbd" stroke-width="1"/><path d="M2.4 4.2H6.6" stroke="#b0b0b0" stroke-width="1"/></svg>
<svg class="a" style="left:459px;top:172.6px" width="9" height="12" viewBox="0 0 9 12"><path d="M0.5 11.2H8.5V4.9L4.5 0.9L0.5 4.9Z" fill="#fff" stroke="#bdbdbd" stroke-width="1"/><path d="M2.4 7.5H6.6" stroke="#b0b0b0" stroke-width="1"/></svg>
<svg class="a" style="left:459px;top:326.6px" width="9" height="12" viewBox="0 0 9 12"><path d="M0.5 11.2H8.5V4.9L4.5 0.9L0.5 4.9Z" fill="#fff" stroke="#bdbdbd" stroke-width="1"/><path d="M2.4 7.5H6.6" stroke="#b0b0b0" stroke-width="1"/></svg>
<svg class="a" style="left:459px;top:370.6px" width="9" height="12" viewBox="0 0 9 12"><path d="M0.5 11.2H8.5V4.9L4.5 0.9L0.5 4.9Z" fill="#fff" stroke="#bdbdbd" stroke-width="1"/><path d="M2.4 7.5H6.6" stroke="#b0b0b0" stroke-width="1"/></svg>
<svg class="a" style="left:459px;top:590.6px" width="9" height="12" viewBox="0 0 9 12"><path d="M0.5 11.2H8.5V4.9L4.5 0.9L0.5 4.9Z" fill="#fff" stroke="#bdbdbd" stroke-width="1"/><path d="M2.4 7.5H6.6" stroke="#b0b0b0" stroke-width="1"/></svg>
<svg class="a" style="left:459px;top:612.6px" width="9" height="12" viewBox="0 0 9 12"><path d="M0.5 11.2H8.5V4.9L4.5 0.9L0.5 4.9Z" fill="#fff" stroke="#bdbdbd" stroke-width="1"/><path d="M2.4 7.5H6.6" stroke="#b0b0b0" stroke-width="1"/></svg>
<svg class="a" style="left:459px;top:876.6px" width="9" height="12" viewBox="0 0 9 12"><path d="M0.5 11.2H8.5V4.9L4.5 0.9L0.5 4.9Z" fill="#fff" stroke="#bdbdbd" stroke-width="1"/><path d="M2.4 7.5H6.6" stroke="#b0b0b0" stroke-width="1"/></svg>
<svg class="a" style="left:477px;top:608px" width="12" height="16" viewBox="0 0 12 16"><circle cx="6" cy="6" r="4.8" fill="#eca31a"/><rect x="3.5" y="9" width="5" height="2.5" fill="#eca31a"/><path d="M3.5 12.5H8.5M4 14.3H8" stroke="#555" stroke-width="1"/></svg>
<div class="a" style="left:510px;top:344px;width:511.5px;height:40px;border:3px solid #dd2a2a;border-radius:5px;box-shadow:0 1px 2px rgba(0,0,0,0.25)"></div>
</body></html>
